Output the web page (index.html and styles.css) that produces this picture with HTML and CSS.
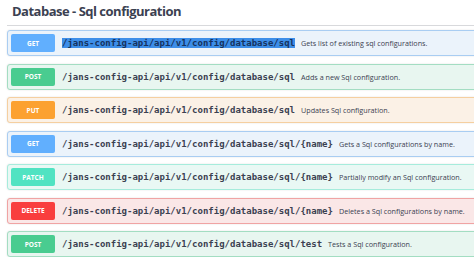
FILE: index.html
```html
<!DOCTYPE html>
<html>
<head>
<meta charset="utf-8">
<link rel="stylesheet" href="styles.css">
</head>
<body>
<div class="section">
  <h3 class="tag">Database - Sql configuration</h3>
  <div class="ops">
    <div class="op get"><span class="method">GET</span><span class="path"><span class="sel">/jans-config-api/api/v1/config/database/sql</span></span><span class="desc">Gets list of existing sql configurations.</span></div>
    <div class="op post"><span class="method">POST</span><span class="path">/jans-config-api/api/v1/config/database/sql</span><span class="desc">Adds a new Sql configuration.</span></div>
    <div class="op put"><span class="method">PUT</span><span class="path">/jans-config-api/api/v1/config/database/sql</span><span class="desc">Updates Sql configuration.</span></div>
    <div class="op get"><span class="method">GET</span><span class="path">/jans-config-api/api/v1/config/database/sql/{name}</span><span class="desc">Gets a Sql configurations by name.</span></div>
    <div class="op patch"><span class="method">PATCH</span><span class="path">/jans-config-api/api/v1/config/database/sql/{name}</span><span class="desc">Partially modify an Sql configuration.</span></div>
    <div class="op delete"><span class="method">DELETE</span><span class="path">/jans-config-api/api/v1/config/database/sql/{name}</span><span class="desc">Deletes a Sql configurations by name.</span></div>
    <div class="op post"><span class="method">POST</span><span class="path">/jans-config-api/api/v1/config/database/sql/test</span><span class="desc">Tests a Sql configuration.</span></div>
  </div>
</div>
</body>
</html>
```
FILE: styles.css
```css
html, body {
  margin: 0;
  padding: 0;
  background: #fff;
  overflow: hidden;
}
.section {
  padding-left: 7px;
  width: 480px;
  font-family: "Open Sans", sans-serif;
  color: #3b4151;
}
.tag {
  margin: 0;
  padding: 2px 0 0 5px;
  height: 23px;
  font-size: 13px;
  letter-spacing: -0.5px;
  font-weight: 700;
  line-height: 19px;
  border-bottom: 1px solid #d8d9dc;
}
.ops {
  display: flex;
  flex-direction: column;
  gap: 7.5px;
  padding-top: 4px;
}
.op {
  display: flex;
  align-items: center;
  height: 24px;
  padding: 0 3px;
  border: 1px solid;
  border-radius: 3px;
  box-shadow: 0 0 2px rgba(0,0,0,.12);
}
.method {
  flex: none;
  width: 44px;
  height: 18px;
  border-radius: 2px;
  color: #fff;
  font-size: 6.5px;
  font-weight: 700;
  display: flex;
  align-items: center;
  justify-content: center;
}
.path {
  margin-left: 7px;
  font-family: "DejaVu Sans Mono", monospace;
  font-weight: 700;
  font-size: 9px;
  color: #3b4151;
}
.sel {
  background: #3d8ee8;
  color: #16325e;
}
.desc {
  margin-left: 6px;
  font-size: 7.2px;
  color: #3b4151;
}
.get { background: #ebf3fb; border-color: #a9cdf2; }
.get .method { background: #61affe; }
.post { background: #e8f6f0; border-color: #a3ddc2; }
.post .method { background: #49cc90; }
.put { background: #fbf1e6; border-color: #f5cfa0; }
.put .method { background: #fca130; }
.patch { background: #e9f8f4; border-color: #a6ecdc; }
.patch .method { background: #50e3c2; }
.delete { background: #fae7e7; border-color: #f0a3a3; }
.delete .method { background: #f93e3e; }
```
